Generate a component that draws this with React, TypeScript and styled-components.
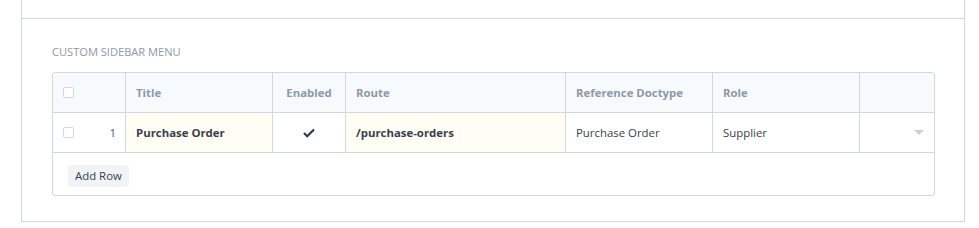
import React from "react";
import styled, { createGlobalStyle } from "styled-components";

const GlobalStyle = createGlobalStyle`
  body {
    margin: 0;
    background: #ffffff;
    font-family: "Open Sans", "Noto Sans", sans-serif;
    color: #36414c;
  }
`;

const Page = styled.div`
  margin-left: 21px;
  width: 944px;
  box-sizing: border-box;
  border-left: 1px solid #d1d8dd;
  border-right: 1px solid #d1d8dd;
  border-bottom: 1px solid #d1d8dd;
`;

const TopSection = styled.div`
  height: 18px;
`;

const Section = styled.div`
  border-top: 1px solid #d1d8dd;
  padding: 25px 29px 25px 30px;
`;

const SectionLabel = styled.div`
  font-size: 11.1px;
  line-height: 15px;
  color: #8d99a6;
  text-transform: uppercase;
  margin-bottom: 13px;
`;

const Grid = styled.div`
  border: 1px solid #d1d8dd;
  border-radius: 3px;
  overflow: hidden;
`;

const columns = "73px 147px 73px 220px 147px 147px 1fr";

const Row = styled.div<{ $header?: boolean }>`
  display: grid;
  grid-template-columns: ${columns};
  height: 40px;
  box-sizing: border-box;
  border-bottom: 1px solid #d1d8dd;
  background: ${(p) => (p.$header ? "#f7fafc" : "#ffffff")};
`;

const Cell = styled.div<{
  $header?: boolean;
  $bold?: boolean;
  $editable?: boolean;
  $align?: "left" | "center" | "right";
}>`
  display: flex;
  align-items: center;
  justify-content: ${(p) =>
    p.$align === "center" ? "center" : p.$align === "right" ? "flex-end" : "flex-start"};
  padding: 0 10px;
  font-size: 11.4px;
  font-weight: ${(p) => (p.$header || p.$bold ? 700 : 400)};
  color: ${(p) => (p.$header ? "#8d99a6" : "#36414c")};
  background: ${(p) => (p.$editable ? "#fffdf4" : "transparent")};
  border-right: 1px solid #d1d8dd;
  overflow: hidden;
  white-space: nowrap;

  &:last-child {
    border-right: none;
  }
`;

const IndexCell = styled(Cell)`
  justify-content: space-between;
  padding: 0 9px 0 10px;
`;

const RowIndex = styled.span`
  color: #3b5a8a;
  font-weight: 400;
`;

const Checkbox = styled.span`
  display: inline-block;
  width: 11px;
  height: 11px;
  box-sizing: border-box;
  border: 1px solid #d1d8dd;
  border-radius: 2px;
  background: #ffffff;
`;

const Caret = styled.span`
  margin-left: auto;
  width: 0;
  height: 0;
  border-left: 5px solid transparent;
  border-right: 5px solid transparent;
  border-top: 5px solid #c8cfd5;
`;

const Footer = styled.div`
  height: 42px;
  padding: 10px 15px;
  box-sizing: border-box;
`;

const AddRowButton = styled.button`
  height: 22px;
  padding: 0 7px;
  border: none;
  border-radius: 3px;
  background: #f0f4f7;
  color: #36414c;
  font-family: "Open Sans", "Noto Sans", sans-serif;
  font-size: 11.4px;
  cursor: pointer;
`;

const CheckMark = () => (
  <svg width="12" height="10" viewBox="0 0 12 10">
    <polyline
      points="1,5 4.2,8.2 11,1.5"
      fill="none"
      stroke="#2c3a52"
      strokeWidth="2.2"
    />
  </svg>
);

const App: React.FC = () => {
  return (
    <>
      <GlobalStyle />
      <Page>
        <TopSection />
        <Section>
          <SectionLabel>Custom Sidebar Menu</SectionLabel>
          <Grid>
            <Row $header>
              <IndexCell $header>
                <Checkbox />
              </IndexCell>
              <Cell $header>Title</Cell>
              <Cell $header $align="center">
                Enabled
              </Cell>
              <Cell $header>Route</Cell>
              <Cell $header>Reference Doctype</Cell>
              <Cell $header>Role</Cell>
              <Cell $header />
            </Row>
            <Row>
              <IndexCell>
                <Checkbox />
                <RowIndex>1</RowIndex>
              </IndexCell>
              <Cell $bold $editable>
                Purchase Order
              </Cell>
              <Cell $align="center">
                <CheckMark />
              </Cell>
              <Cell $bold $editable>
                /purchase-orders
              </Cell>
              <Cell>Purchase Order</Cell>
              <Cell>Supplier</Cell>
              <Cell>
                <Caret />
              </Cell>
            </Row>
            <Footer>
              <AddRowButton>Add Row</AddRowButton>
            </Footer>
          </Grid>
        </Section>
      </Page>
    </>
  );
};

export default App;
